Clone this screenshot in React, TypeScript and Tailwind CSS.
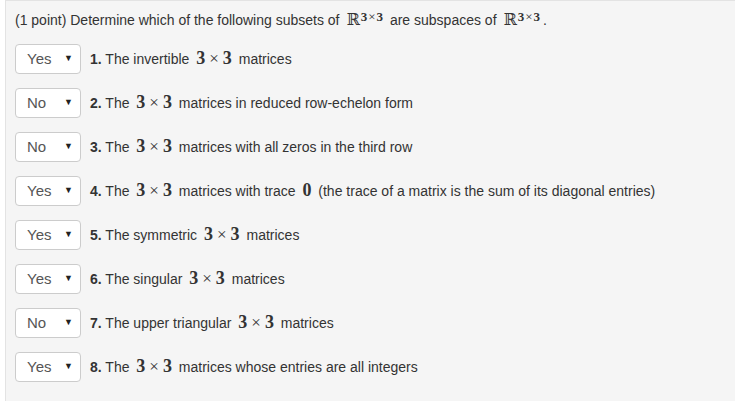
const rows: { answer: string; parts: (string | { m: string })[] }[] = [
    { answer: 'Yes', parts: ['The invertible ', { m: '3×3' }, ' matrices'] },
    { answer: 'No', parts: ['The ', { m: '3×3' }, ' matrices in reduced row-echelon form'] },
    { answer: 'No', parts: ['The ', { m: '3×3' }, ' matrices with all zeros in the third row'] },
    {
        answer: 'Yes',
        parts: ['The ', { m: '3×3' }, ' matrices with trace ', { m: '0' }, ' (the trace of a matrix is the sum of its diagonal entries)'],
    },
    { answer: 'Yes', parts: ['The symmetric ', { m: '3×3' }, ' matrices'] },
    { answer: 'Yes', parts: ['The singular ', { m: '3×3' }, ' matrices'] },
    { answer: 'No', parts: ['The upper triangular ', { m: '3×3' }, ' matrices'] },
    { answer: 'Yes', parts: ['The ', { m: '3×3' }, ' matrices whose entries are all integers'] },
];

const Math = ({ m }: { m: string }) => {
    if (m === '3×3') {
        return (
            <span className="mx-[3px] font-['Liberation_Serif',serif] text-[18px] leading-none font-semibold">
                3<span className="mx-[4px] text-[17px] font-normal">×</span>3
            </span>
        );
    }
    return <span className="mx-[3px] font-['Liberation_Serif',serif] text-[18px] leading-none font-semibold">{m}</span>;
};

const Reals = () => (
    <span className="mx-[3px] font-['DejaVu_Serif',serif] text-[16px] text-[#333]">
        ℝ
        <sup className="relative -top-[4px] ml-[1px] font-['Liberation_Serif',serif] text-[13px] font-bold">
            3<span className="mx-[1px] font-normal">×</span>3
        </sup>
    </span>
);

const AnswerSelect = ({ value }: { value: string }) => (
    <div className="flex h-[30px] w-[66px] shrink-0 items-center justify-between rounded-[4px] border border-[#cccccc] bg-white pr-[7px] pl-[11px] text-[15px] text-[#555555]">
        <span>{value}</span>
        <span className="text-[9px] text-[#222]">▼</span>
    </div>
);

export default function App() {
    return (
        <div className="h-[401px] w-[735px] overflow-hidden bg-white font-['Liberation_Sans',Arial,sans-serif] text-[14px] text-[#333333]">
            <div className="ml-[5px] h-[420px] border-t border-l border-[#e3e3e3] bg-[#f5f5f5] pt-[9px] pl-[9px]">
                <p className="h-[20px] leading-[20px]">
                    (1 point) Determine which of the following subsets of <Reals /> are subspaces of <Reals />.
                </p>
                <div className="mt-[14px] flex flex-col gap-[14px]">
                    {rows.map((row, i) => (
                        <div key={i} className="flex items-center">
                            <AnswerSelect value={row.answer} />
                            <span className="ml-[9px] whitespace-nowrap">
                                <b>{i + 1}.</b>{' '}
                                {row.parts.map((p, j) => (typeof p === 'string' ? <span key={j}>{p}</span> : <Math key={j} m={p.m} />))}
                            </span>
                        </div>
                    ))}
                </div>
            </div>
        </div>
    );
}
